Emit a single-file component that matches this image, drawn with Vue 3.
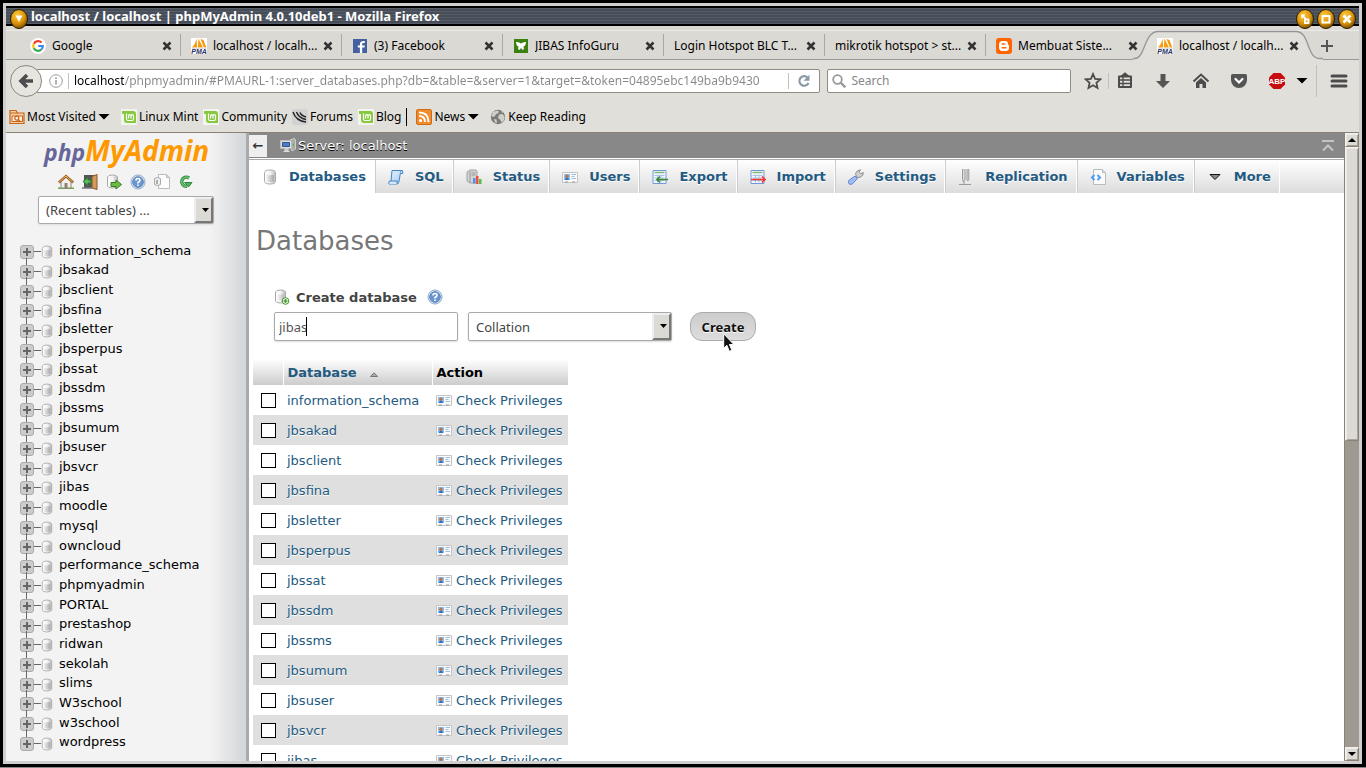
<script setup>
import { ref } from 'vue'

const browserTabs = [
  { title: 'Google', icon: 'google' },
  { title: 'localhost / localh...', icon: 'pma' },
  { title: '(3) Facebook', icon: 'facebook' },
  { title: 'JIBAS InfoGuru', icon: 'jibas' },
  { title: 'Login Hotspot BLC T...' },
  { title: 'mikrotik hotspot > st...' },
  { title: 'Membuat Siste...', icon: 'blogger' },
  { title: 'localhost / localh...', icon: 'pma', active: true }
]

const bookmarks = [
  { title: 'Most Visited', icon: 'visited', menu: true },
  { title: 'Linux Mint', icon: 'mint' },
  { title: 'Community', icon: 'mint' },
  { title: 'Forums', icon: 'forums' },
  { title: 'Blog', icon: 'mint', last: true },
  { title: 'News', icon: 'rss', menu: true },
  { title: 'Keep Reading', icon: 'globe' }
]

const tools = [
  { label: 'Home', icon: 'home' },
  { label: 'Log out', icon: 'exit' },
  { label: 'Query window', icon: 'dbgo' },
  { label: 'phpMyAdmin documentation', icon: 'help' },
  { label: 'Documentation', icon: 'docs' },
  { label: 'Reload navigation frame', icon: 'refresh' }
]

const tree = [
  'information_schema', 'jbsakad', 'jbsclient', 'jbsfina', 'jbsletter', 'jbsperpus', 'jbssat',
  'jbssdm', 'jbssms', 'jbsumum', 'jbsuser', 'jbsvcr', 'jibas', 'moodle', 'mysql', 'owncloud',
  'performance_schema', 'phpmyadmin', 'PORTAL', 'prestashop', 'ridwan', 'sekolah', 'slims',
  'W3school', 'w3school', 'wordpress'
]

const menu = [
  { title: 'Databases', icon: 'db', active: true },
  { title: 'SQL', icon: 'sql' },
  { title: 'Status', icon: 'status' },
  { title: 'Users', icon: 'users' },
  { title: 'Export', icon: 'export' },
  { title: 'Import', icon: 'import' },
  { title: 'Settings', icon: 'wrench' },
  { title: 'Replication', icon: 'replication' },
  { title: 'Variables', icon: 'variables' },
  { title: 'More', icon: 'more' }
]

const rows = tree.slice(0, 13)
const url = ref('localhost/phpmyadmin/#PMAURL-1:server_databases.php?db=&table=&server=1&target=&token=04895ebc149ba9b9430a')
const search = ref('')
const dbName = ref('jibas')
</script>

<template>
  <svg class="sprites" aria-hidden="true">
    <defs>
      <linearGradient id="cyl" x1="0" x2="1"><stop offset="0" stop-color="#fff" /><stop offset=".5" stop-color="#f4f4f4" /><stop offset="1" stop-color="#bbb" /></linearGradient>
      <linearGradient id="cylIn" x1="0" x2="1"><stop offset="0" stop-color="#f6f6f6" /><stop offset="1" stop-color="#a8a8a8" /></linearGradient>
      <radialGradient id="gold" cx=".4" cy=".3" r=".75"><stop offset="0" stop-color="#ffc83c" /><stop offset=".6" stop-color="#d99208" /><stop offset="1" stop-color="#6d4500" /></radialGradient>
      <linearGradient id="paper" x1="0" x2="1" y1="0" y2="1"><stop offset="0" stop-color="#e4f0fd" /><stop offset="1" stop-color="#a9cdf3" /></linearGradient>
    </defs>
    <symbol id="google" viewBox="0 0 16 16"><circle cx="8" cy="8" r="8" fill="#fff" /><g fill="none" stroke-width="2.2"><path d="M11.6 4.6A4.8 4.8 0 0 0 3.8 5.7" stroke="#ea4335" /><path d="M3.8 5.7a4.8 4.8 0 0 0 0 4.6" stroke="#fbbc05" /><path d="M3.8 10.3a4.8 4.8 0 0 0 7.5 1.2" stroke="#34a853" /><path d="M11.3 11.5A4.6 4.6 0 0 0 12.8 8H8.2" stroke="#4285f4" /></g></symbol>
    <symbol id="facebook" viewBox="0 0 16 16"><path d="M1 1h14v14H1z" fill="#4460a0" /><path d="M10.200 15V9.600h2.300l.3-2.200h-2.600V6.200c0-.8.3-1.200 1.200-1.200h1.400V3.100C10 2.700 7.900 3.500 7.900 6v1.400H5.800v2.200h2.100V15z" fill="#fff" /></symbol>
    <symbol id="jibas" viewBox="0 0 16 16"><path d="M1 1h14v14H1z" fill="#3d8012" /><path d="M8 5.500Q5.500 3.500 3 4q.2 4 2.800 4.700Q4 11 6.500 12L8 10l1.500 2Q12 11 10.200 8.700 12.800 8 13 4q-2.500-.5-5 1.500" fill="#fff" /></symbol>
    <symbol id="blogger" viewBox="0 0 16 16"><rect width="16" height="16" rx="3" fill="#f60" /><path d="M6.500 3h2.600Q12 3.200 12 6c0 1.200 1 .7 1 1.800v2Q12.800 13 9.800 13H6.200Q3.200 12.800 3 9.800V6.200Q3.200 3.200 6.500 3" fill="#fff" /><path d="M6.200 6h2.600M6.200 9.800h3.700" stroke="#f60" stroke-width="1.500" stroke-linecap="round" /></symbol>
    <symbol id="visited" viewBox="0 0 16 16"><path d="M1 14.500V1.500h6l1.500 2.500h6.500v10.500z" fill="#f5cfa6" stroke="#c8651b" stroke-width="1.200" /><path d="M1 4h8M3 7h10.500v5.500H3z" fill="#fff0df" stroke="#c8651b" /><circle cx="7.800" cy="9.200" r="2" fill="none" stroke="#c8651b" stroke-width="1.200" /><path d="m9.300 10.700 2 2" stroke="#c8651b" stroke-width="1.400" /></symbol>
    <symbol id="mint" viewBox="0 0 16 16"><path d="M0 0h16v16H0z" fill="#f3f4ef" /><path d="M1 2h11q3 0 3 3v9H6q-3 0-3-3V5H1z" fill="#86c93f" /><path d="M5.500 4.500V10q0 1.500 1.500 1.500h4q1.500 0 1.500-1.500V7q0-1.300-1.200-1.300T10 7v2.500M10 7q0-1.300-1.200-1.300T7.600 7v2.500" fill="none" stroke="#fff" stroke-width="1.200" /></symbol>
    <symbol id="forums" viewBox="0 0 16 16"><rect width="16" height="16" rx="3" fill="#d2d2d2" /><path d="M1 3q3 9 13 10M4.500 3q2 6 9.500 7.500M8 3.500q1 3 6 4.500" fill="none" stroke="#222" stroke-width="1.400" /></symbol>
    <symbol id="rss" viewBox="0 0 16 16"><rect x=".5" y=".5" width="15" height="15" rx="1.500" fill="#f08c2e" stroke="#d16b10" /><circle cx="4.500" cy="11.500" r="1.600" fill="#fff" /><path d="M3 7q6 0 6 6M3 3.500q9.500 0 9.500 9.500" fill="none" stroke="#fff" stroke-width="1.900" /></symbol>
    <symbol id="globe" viewBox="0 0 16 16"><circle cx="8" cy="8" r="7.200" fill="#7b7b78" /><path d="m3 3 4-1.500 2 1-1 2-2 .5L5 7 3 8 1.500 7zM9 5.500l3.500-.5 2.300 3-1 3.500-2 2-1.800-3L8 9zM4 10l2.500.5L7 14l-2-.6zM11 2l2 1-1 1z" fill="#cfcfcb" /></symbol>
    <symbol id="home" viewBox="0 0 16 16"><path d="M0 13.500h16V15H0z" fill="#6aaa4c" /><path d="M3 7.500 8 3l5 4.500V14H3z" fill="#f1efe9" stroke="#8c8579" /><path d="M6.500 9h3v5h-3z" fill="#8f8171" /><path d="M.8 8.500 8 2l7.200 6.500" fill="none" stroke="#9a5a20" stroke-width="2.400" /><path d="M1.200 8.200 8 2l6.800 6.200" fill="none" stroke="#edb765" stroke-width="1" /></symbol>
    <symbol id="exit" viewBox="0 0 16 16"><path d="M2 1h11v13H2z" fill="#555" /><path d="M10 2.500 15 .5v15l-5-1.500z" fill="#d49a5c" stroke="#8a5a2b" /><path d="M0 14h10" stroke="#777" stroke-width="1.500" /><path d="M9 6H6V3.500L1 7.500l5 4V9h3z" fill="#62b85f" stroke="#257c38" /></symbol>
    <symbol id="db" viewBox="0 0 14 16"><path d="M1.500 3.500Q2 1 7 1t5.500 2.500v9Q12 15 7 15t-5.500-2.500z" fill="url(#cyl)" stroke="#aaa" /><path d="M3 5.500q4 1.500 8 0v7q-4 1.500-8 0z" fill="url(#cylIn)" /></symbol>
    <symbol id="dbgo" viewBox="0 0 16 16"><path d="M1.500 3Q2 1 6.500 1t5 2v9q-.5 2-5 2t-5-2z" fill="url(#cyl)" stroke="#aaa" /><path d="M5 8.500h5V6l5.500 4.500L10 15v-2.500H5z" fill="#6fba45" stroke="#397b23" /></symbol>
    <symbol id="dbadd" viewBox="0 0 16 16"><path d="M1.500 3Q2 1 6.500 1t5 2v9q-.5 2-5 2t-5-2z" fill="url(#cyl)" stroke="#aaa" /><path d="M3 5q3.500 1.500 7 0v6q-3.500 1.500-7 0z" fill="url(#cylIn)" opacity=".6" /><circle cx="11.500" cy="12" r="3.300" fill="#fff" stroke="#3f8f2c" /><path d="M11.500 10v4M9.500 12h4" stroke="#4b9d35" stroke-width="1.600" /></symbol>
    <symbol id="help" viewBox="0 0 16 16"><circle cx="8" cy="8" r="7" fill="#dfeafa" stroke="#8fa9c8" /><circle cx="8" cy="8" r="5.300" fill="#6b97d0" stroke="#5680b8" /><path d="M6 6.500q0-2 2-2t2 1.700Q10 7.200 8 8.500v1M8 10.500v1.500" fill="none" stroke="#fff" stroke-width="1.600" /></symbol>
    <symbol id="docs" viewBox="0 0 16 16"><path d="M4.500.5h8l3 3v11h-11z" fill="#fcfcfc" stroke="#bbb" /><path d="M12.500.5v3h3" fill="#ddd" stroke="#bbb" /><path d="M.5 4.500q3-2 6 0v6q-3 2-6 0z" fill="#eee" stroke="#aaa" /><path d="M3 6v4" stroke="#999" stroke-width="1.500" /></symbol>
    <symbol id="refresh" viewBox="0 0 16 16"><path d="M11 4A4.600 4.600 0 1 0 9 12.300" fill="none" stroke="#2d8a43" stroke-width="3.400" /><path d="M11 4A4.600 4.600 0 1 0 9 12.300" fill="none" stroke="#6cc06b" stroke-width="1.600" /><path d="M6.500 8.500h7.500L10.500 13z" fill="#55ad5b" stroke="#2d8a43" /></symbol>
    <symbol id="server" viewBox="0 0 16 16"><path d="m10 2 4-1.500 1.500 1v9.500l-3.500 2z" fill="#aaa" stroke="#ccc" /><path d="M.5 2.500h11v8H.5z" fill="#ddd" stroke="#bbb" /><path d="M2.500 4.500h7v4h-7z" fill="#4e7cc4" stroke="#315591" /><path d="M5 11h3v2H5zM3.500 13.500h6" fill="#bbb" stroke="#ddd" /><path d="M13.500 6v2" stroke="#49b649" /></symbol>
    <symbol id="sql" viewBox="0 0 16 16"><path d="M4 1.500h10.500q-2 0-2 2l-1.500 9Q10.500 15 9 15H1q1.500-.5 2-3z" fill="url(#paper)" stroke="#4384c6" /><path d="M12.500 4.500h2.200q.5-3-1.200-3M1 15q-.8-1.500.5-3h8q-1 2-.2 3" fill="#d4e6fa" stroke="#4384c6" /></symbol>
    <symbol id="status" viewBox="0 0 16 16"><path d="M1 3 4 1h6l1 1v12H4l-3-2z" fill="#d2d2d2" stroke="#a2a2a2" /><path d="M4 2.500v11M5.500 4h4M5.500 6h4" stroke="#999" /><path d="M7 9h2.500v5.500H7z" fill="#5590e8" /><path d="M10 7h2.500v8H10z" fill="#f0503a" /><path d="M13 10h2.500v5H13z" fill="#4fbd4b" /></symbol>
    <symbol id="users" viewBox="0 0 16 16"><path d="M.5 3.500h15v10H.5z" fill="#fafafa" stroke="#c5c5c5" /><path d="M2 5h6v6H2z" fill="#8dbef0" /><path d="M3 11q0-2.500 2-2.500T7 11z" fill="#2872c5" /><circle cx="5" cy="7.200" r="1.700" fill="#bd7344" /><path d="M9.500 5.500H14M9.500 7.500h3M9.500 9.500H14" stroke="#9ebedf" /><path d="M3 13h3M10 13h3" stroke="#999" /></symbol>
    <symbol id="export" viewBox="0 0 16 16"><path d="M1 1.500h13v13H1z" fill="#f4f8fd" stroke="#6e9ad8" /><path d="M2.500 3.500h10" stroke="#80bc74" stroke-width="1.500" /><path d="M2.500 6.500h10M2.500 9h10M2.500 11.500h10M5.500 5.500v8M9 5.500v8" stroke="#a9c1e5" /><path d="M16 10.500H5m3-3-3 3 3 3" fill="none" stroke="#3f8635" stroke-width="1.700" /></symbol>
    <symbol id="import" viewBox="0 0 16 16"><path d="M1 1.500h13v13H1z" fill="#f4f8fd" stroke="#6e9ad8" /><path d="M2.500 3.500h10" stroke="#80bc74" stroke-width="1.500" /><path d="M2.500 6.500h10M2.500 9h10M2.500 11.500h10M5.500 5.500v8M9 5.500v8" stroke="#a9c1e5" /><path d="M1 10.500h14m-3-3 3 3-3 3" fill="none" stroke="#ef3a32" stroke-width="1.700" /></symbol>
    <symbol id="wrench" viewBox="0 0 16 16"><path d="m8.500 7.500-1-3Q9 1 12.500.8L11 3.300l1.500 1.500L15.300 3.500Q15.500 7 12.500 8L10 8.500z" fill="#d2d2d2" stroke="#8b8b8b" /><path d="m7 7 2.500 2.500-5 5.300q-2 1.200-3.500 0t0-3.500z" fill="#9ebef3" stroke="#6484d2" /></symbol>
    <symbol id="replication" viewBox="0 0 16 16"><path d="M4.500 0v10.500l1 2.500L7 11V0M9 0v10.500l.8 1.500 1-1.500V0" fill="#ddd" stroke="#999" /><path d="M1 15.500h12M6 13v2" stroke="#999" /></symbol>
    <symbol id="variables" viewBox="0 0 16 16"><path d="M3.500.5h9l3 3v12h-12z" fill="#fafafa" stroke="#bbb" /><path d="M12.500.5v3h3" fill="#ddd" stroke="#bbb" /><path d="M4.500 6 2 8.500 4.500 11M7.500 6 10 8.500 7.500 11" fill="none" stroke="#529df0" stroke-width="2" /></symbol>
    <symbol id="more" viewBox="0 0 16 16"><path d="M3 5.500h10l-5 5z" fill="#888" stroke="#111" /></symbol>
    <symbol id="plus" viewBox="0 0 14 14"><rect x=".5" y=".5" width="13" height="13" rx="2.500" fill="#ccc" stroke="#aaa" /><path d="M7 3v8M3 7h8" stroke="#666" stroke-width="2" /></symbol>
    <symbol id="close" viewBox="0 0 10 10"><path d="m1.500 1.500 7 7m0-7-7 7" stroke="#333" stroke-width="2.500" /></symbol>
    <symbol id="star" viewBox="0 0 18 18"><path d="m9 2 2.100 4.800 5.200.5-3.900 3.500 1.100 5.100L9 13.200l-4.500 2.700 1.100-5.100-3.900-3.500 5.200-.5z" fill="none" stroke="#4c4c4c" stroke-width="1.800" /></symbol>
    <symbol id="clip" viewBox="0 0 18 18"><path d="M3 4.500h12V15H3z" fill="none" stroke="#4c4c4c" stroke-width="2" stroke-linejoin="round" /><path d="m5.500 4 3.500-3 3.500 3zM3 8h12M3 11.500h12M7 5v10" stroke="#4c4c4c" stroke-width="1.300" fill="#4c4c4c" /></symbol>
    <symbol id="down" viewBox="0 0 18 18"><path d="M6.500 2h5v7H16l-7 7-7-7h4.500z" fill="#555" /></symbol>
    <symbol id="house" viewBox="0 0 18 18"><path d="M1.500 9.500 9 2.500l7.500 7" fill="none" stroke="#4c4c4c" stroke-width="2" /><path d="M4 10.500 9 6l5 4.500V16h-3.500v-4h-3v4H4z" fill="#4c4c4c" /></symbol>
    <symbol id="pocket" viewBox="0 0 18 18"><path d="M2.500 2h13q1.500 0 1.500 1.500V8a8 8 0 0 1-16 0V3.500Q1 2 2.500 2" fill="#555" /><path d="m5.500 7 3.500 3.500L12.500 7" fill="none" stroke="#fff" stroke-width="2.200" stroke-linecap="round" /></symbol>
    <symbol id="burger" viewBox="0 0 18 18"><path d="M2 4h14M2 9h14M2 14h14" stroke="#4c4c4c" stroke-width="3" stroke-linecap="round" /></symbol>
  </svg>

  <div class="screen">
    <div class="frame">
      <header class="titlebar">
        <button class="orb" aria-label="Window menu"><svg viewBox="0 0 18 20"><ellipse cx="9" cy="10" rx="8.500" ry="9.500" fill="url(#gold)" stroke="#2b1c00" /><path d="M5.500 6.500h7L9 13z" fill="#fff" /></svg></button>
        <h2>localhost / localhost | phpMyAdmin 4.0.10deb1 - Mozilla Firefox</h2>
        <div class="orbs">
          <button class="orb" aria-label="Minimize"><svg viewBox="0 0 18 20"><ellipse cx="9" cy="10" rx="8.500" ry="9.500" fill="url(#gold)" stroke="#2b1c00" /><path d="M9 10.500h3.500V14H9z" fill="none" stroke="#fff" stroke-width="1.800" /><path d="M5 5.500h4.500L8 7l2.500 2.500-1.500 1L7 8.500 5.500 10z" fill="#fff" /></svg></button>
          <button class="orb" aria-label="Maximize"><svg viewBox="0 0 18 20"><ellipse cx="9" cy="10" rx="8.500" ry="9.500" fill="url(#gold)" stroke="#2b1c00" /><path d="M5.500 7h7v6.500h-7z" fill="none" stroke="#fff" stroke-width="2" /></svg></button>
          <button class="orb" aria-label="Close"><svg viewBox="0 0 18 20"><ellipse cx="9" cy="10" rx="8.500" ry="9.500" fill="url(#gold)" stroke="#2b1c00" /><path d="m5.500 6.500 7 7m0-7-7 7" stroke="#fff" stroke-width="2.600" /></svg></button>
        </div>
      </header>

      <nav class="tabstrip" aria-label="Browser tabs">
        <div v-for="(t, i) in browserTabs" :key="i" class="tab" :class="{ active: t.active, before: i === 6 }">
          <svg v-if="t.active" class="shape" viewBox="0 0 190 30" preserveAspectRatio="none"><path d="M0 28.500h2C12 28.500 11 1.500 25 1.500H163C177 1.500 173 28.500 187 28.500h3V30H0z" fill="#e0dfd9" /><path d="M0 28.500h2C12 28.500 11 1.500 25 1.500H163C177 1.500 173 28.500 187 28.500h3" fill="none" stroke="#96969a" stroke-width="1.300" /></svg>
          <svg v-if="t.icon === 'pma'" class="i16" viewBox="0 0 16 16"><path d="M0 0h16v16H0z" fill="#fff" /><path d="M1 9.500Q4.500 6 5.500 1l.8 8.500zM7 9.500 7.300.5 12 9.500zM9.500 1l3 1 2.800 7.500h-2.400z" fill="#f79a10" /><path d="M1 10.300h14.500" stroke="#d9d9d9" /><text x="8" y="16" text-anchor="middle" font-family="Liberation Sans" font-size="7" font-weight="bold" font-style="italic" fill="#2c3166">PMA</text></svg>
          <svg v-else-if="t.icon" class="i16"><use :href="'#' + t.icon" /></svg>
          <span>{{ t.title }}</span>
          <button aria-label="Close tab"><svg class="i10"><use href="#close" /></svg></button>
        </div>
        <button class="newtab" aria-label="New tab"><svg viewBox="0 0 14 14"><path d="M7 1v12M1 7h12" stroke="#555" stroke-width="2" /></svg></button>
      </nav>

      <div class="navbar">
        <button class="back" aria-label="Back"><svg viewBox="0 0 32 32"><circle cx="16" cy="16" r="15.500" fill="#e6e5e0" stroke="#8a877e" /><path d="M23 16H11m6-6-6 6 6 6" fill="none" stroke="#4c4c4c" stroke-width="3.600" /></svg></button>
        <div class="urlbox">
          <svg class="info" viewBox="0 0 14 14"><circle cx="7" cy="7" r="6.300" fill="none" stroke="#999" /><path d="M7 6v4.500M7 3.300V5" stroke="#999" stroke-width="1.500" /></svg>
          <i class="bar"></i>
          <input v-model="url" class="url" aria-label="Address" />
          <i class="bar"></i>
          <button class="reload" aria-label="Reload"><svg viewBox="0 0 14 14"><path d="M10.500 3.500A4.800 4.800 0 1 0 11.500 9" fill="none" stroke="#8a9aa6" stroke-width="2.200" /><path d="M12.500.8v6h-6z" fill="#8a9aa6" /></svg></button>
        </div>
        <div class="searchbox">
          <svg viewBox="0 0 14 14"><circle cx="5.500" cy="5.500" r="4.300" fill="none" stroke="#999" stroke-width="1.800" /><path d="m8.500 8.500 4.800 4.800" stroke="#999" stroke-width="2.400" /></svg>
          <input v-model="search" placeholder="Search" aria-label="Search" />
        </div>
        <div class="buttons">
          <button aria-label="Bookmark this page"><svg><use href="#star" /></svg></button>
          <i class="bar"></i>
          <button aria-label="Bookmarks"><svg><use href="#clip" /></svg></button>
          <button class="wide" aria-label="Downloads"><svg><use href="#down" /></svg></button>
          <button class="wide" aria-label="Home"><svg><use href="#house" /></svg></button>
          <button class="wide" aria-label="Pocket"><svg><use href="#pocket" /></svg></button>
          <button class="wide" aria-label="Adblock Plus"><svg viewBox="0 0 18 18"><path d="M5.500 1h7L17 5.500v7L12.500 17h-7L1 12.500v-7z" fill="#c70d0d" /><text x="9" y="12" text-anchor="middle" font-family="Liberation Sans" font-size="8" font-weight="bold" fill="#fff">ABP</text></svg></button>
          <button class="caret" aria-label="Adblock Plus menu"></button>
          <i class="bar tall"></i>
          <button class="burger" aria-label="Open menu"><svg><use href="#burger" /></svg></button>
        </div>
      </div>

      <nav class="bookmarks" aria-label="Bookmarks">
        <a v-for="b in bookmarks" :key="b.title" href="#" :class="{ folder: b.menu, last: b.last }">
          <svg class="i16"><use :href="'#' + b.icon" /></svg>{{ b.title }}<i v-if="b.menu"></i>
        </a>
      </nav>

      <div class="page">
        <aside class="sidebar">
          <a href="#" class="logo"><span>php</span>MyAdmin</a>
          <div class="tools">
            <a v-for="t in tools" :key="t.icon" href="#" :aria-label="t.label"><svg class="i16"><use :href="'#' + t.icon" /></svg></a>
          </div>
          <div class="select recent">
            <select aria-label="Recent tables"><option>(Recent tables) ...</option></select>
          </div>
          <ul class="tree">
            <li v-for="name in tree" :key="name">
              <button :aria-label="'Expand ' + name"><svg><use href="#plus" /></svg></button>
              <svg class="dbicon"><use href="#db" /></svg>
              <a href="#">{{ name }}</a>
            </li>
          </ul>
        </aside>
        <div class="splitter"></div>

        <main>
          <div class="crumb">
            <button aria-label="Hide panel">←</button>
            <svg class="i16"><use href="#server" /></svg>
            <a href="#">Server: localhost</a>
            <svg class="totop" viewBox="0 0 12 12"><path d="M0 1h12M1 10.500l5-5 5 5" fill="none" stroke="#c4c4c4" stroke-width="2" /></svg>
          </div>
          <nav class="menu" aria-label="Server">
            <a v-for="m in menu" :key="m.title" href="#" :class="{ active: m.active }"><svg class="i16"><use :href="'#' + m.icon" /></svg>{{ m.title }}</a>
          </nav>
          <div class="body">
            <h1>Databases</h1>
            <form class="create" @submit.prevent>
              <div class="legend">
                <svg class="i16"><use href="#dbadd" /></svg>
                <label for="newdb">Create database</label>
                <a href="#" aria-label="Documentation"><svg class="i16"><use href="#help" /></svg></a>
              </div>
              <div class="fields">
                <div class="field">
                  <input id="newdb" v-model="dbName" /><i class="textcaret"></i>
                </div>
                <div class="select collation">
                  <select aria-label="Collation"><option>Collation</option></select>
                </div>
                <div class="submit">
                  <button>Create</button>
                  <svg class="pointer" viewBox="0 0 12 20"><path d="M.7.8v14.500l3.200-3 2.400 6 2.600-1.100-2.500-5.700h4.500z" fill="#111" stroke="#fff" /></svg>
                </div>
              </div>
            </form>
            <table>
              <thead>
                <tr><th class="c1"></th><th class="c2"><a href="#">Database</a><svg viewBox="0 0 8 5"><path d="M.5 4.500 4 .8l3.500 3.700z" fill="#aaa" stroke="#777" /></svg></th><th class="c3">Action</th></tr>
              </thead>
              <tbody>
                <tr v-for="name in rows" :key="name">
                  <td class="c1"><input type="checkbox" :aria-label="name" /></td>
                  <td class="c2"><a href="#">{{ name }}</a></td>
                  <td class="c3"><a href="#"><svg class="i16"><use href="#users" /></svg>Check Privileges</a></td>
                </tr>
              </tbody>
            </table>
          </div>
        </main>

        <div class="scroll">
          <button class="up" aria-label="Scroll up"></button>
          <div class="track"><div class="thumb"></div></div>
          <button class="dn" aria-label="Scroll down"></button>
        </div>
      </div>
    </div>
  </div>
</template>

<style>
html, body { margin: 0; background: #000; }
</style>

<style scoped>
* { box-sizing: border-box; }
.sprites { position: absolute; width: 0; height: 0; }
a { text-decoration: none; color: inherit; }
button { padding: 0; border: 0; background: none; display: flex; align-items: center; justify-content: center; }
svg { display: block; flex: none; }
.i16 { width: 16px; height: 16px; }
.i10 { width: 10px; height: 10px; }
.screen { height: 100vh; overflow: hidden; padding: 3px 4px 3px 3px; background: #000; border-bottom: 1px solid #888; font-family: "Noto Sans", "Open Sans", sans-serif; font-size: 12px; color: #000; }
.frame { height: 100%; border: 3px solid #cfcfcd; display: flex; flex-direction: column; background: #e0dfd9; }

.titlebar { height: 20px; flex: none; display: flex; align-items: center; padding: 0 3px 0 4px; border-top: 2px solid #000; border-bottom: 2px solid #000; background: repeating-linear-gradient(#565d67 0 1px, #464d58 1px 3px); position: relative; z-index: 2; }
.titlebar h2 { margin: 0 auto 0 3px; color: #fff; font-size: 13px; line-height: 18px; font-weight: bold; white-space: nowrap; }
.orbs { display: flex; gap: 3px; }
.orb, .orb svg { width: 18px; height: 20px; }
.titlebar .orb { margin-top: 5px; }

.tabstrip { height: 34px; flex: none; display: flex; padding: 4px 0 0 14px; background: #dbd9d4; border-bottom: 1px solid #98979a; box-shadow: inset 0 4px #dcdad5, inset 0 5px #eceae6; }
.tab { position: relative; flex: 0 1 161px; min-width: 0; display: flex; align-items: center; gap: 6px; padding: 2px 9px 0 10px; }
.tab::after { content: ""; position: absolute; right: 0; top: 4px; bottom: 3px; width: 1px; background: #aaa8a2; }
.tab.before::after, .tab.active::after { display: none; }
.tab > * { position: relative; }
.tab span { flex: 1; white-space: nowrap; overflow: hidden; line-height: 18px; }
.tab .shape { position: absolute; left: -14px; top: 0; width: 190px; height: 30px; }
.newtab { margin-left: 12px; width: 14px; padding-top: 2px; }
.newtab svg { width: 14px; height: 14px; }

.navbar { height: 41px; flex: none; display: flex; align-items: center; padding: 0 11px 0 4px; }
.back { position: relative; z-index: 1; margin-right: -6px; }
.back, .back svg { width: 32px; height: 32px; }
.bar { width: 1px; height: 16px; background: #c2c1bb; flex: none; }
.urlbox, .searchbox { height: 24px; display: flex; align-items: center; background: #fff; border: 1px solid #8f8b82; border-radius: 2px; }
.urlbox { flex: 798 1 0; min-width: 0; padding-left: 12px; gap: 5px; }
.info { width: 14px; height: 14px; }
.url { flex: 1; min-width: 0; margin-right: 24px; color: transparent; background: linear-gradient(90deg, #000 50px, #888 50px); background-clip: text; -webkit-background-clip: text; }
.url, .searchbox input { border: 0; padding: 0; outline: 0; font: 12px/18px "Noto Sans", sans-serif; }
.reload { width: 19px; margin-right: 6px; }
.reload svg { width: 14px; height: 14px; }
.searchbox { flex: 242 1 0; min-width: 0; margin-left: 7px; padding: 0 4px; gap: 5px; }
.searchbox svg { width: 14px; height: 14px; }
.searchbox input { flex: 1; min-width: 0; background: none; }
.searchbox input::placeholder { color: #888; }
.buttons { flex: none; display: flex; align-items: center; padding-left: 13px; }
.buttons svg { width: 18px; height: 18px; }
.buttons > .bar { margin: 0 7px 0 6px; }
.wide { margin-left: 20px; }
.caret { width: 12px; height: 6px; margin-left: 10px; background: #000; clip-path: polygon(0 0, 100% 0, 50% 100%); }
.buttons > .tall { height: 32px; margin: 0 13px 0 8px; }

.bookmarks { height: 32px; flex: none; display: flex; align-items: center; padding: 0 3px; border-bottom: 1px solid #8a8275; }
.bookmarks a { display: flex; align-items: center; gap: 2px; margin-right: 5px; line-height: 18px; white-space: nowrap; }
.bookmarks a i { width: 12px; height: 6px; background: #000; clip-path: polygon(0 0, 100% 0, 50% 100%); }
.bookmarks .folder { margin-right: 11px; }
.bookmarks .last { padding-right: 5px; margin-right: 9px; border-right: 1px solid #000; }

.page { flex: 1; min-height: 0; display: flex; background: #fff; font-family: "DejaVu Sans", sans-serif; font-size: 13px; }
.sidebar { width: 240px; flex: none; display: flex; flex-direction: column; overflow: hidden; background: linear-gradient(90deg, #f3f3f3 85%, #d2d5d9); }
.logo { padding-left: 38px; color: #f90; font: italic bold 28px/34px "Noto Sans", sans-serif; }
.logo span { color: #669; font-size: 23px; }
.tools { display: flex; gap: 8px; padding-left: 52px; height: 26px; align-items: center; }
.select { position: relative; background: #fff; border: 1px solid #aaa; border-radius: 2px; box-shadow: 0 1px 2px #ddd; }
.select select { width: 100%; height: 100%; appearance: none; border: 0; background: none; padding: 0 18px 0 7px; font: 13px "Noto Sans", sans-serif; color: #444; }
.select::before { content: ""; position: absolute; right: 0; top: 0; bottom: 0; width: 15px; background: #dcdad5; border: 2px solid; border-color: #eee #777 #777 #eee; }
.select::after { content: ""; position: absolute; right: 4px; top: 11px; width: 7px; height: 4px; background: #000; clip-path: polygon(0 0, 100% 0, 50% 100%); }
.recent { width: 176px; height: 28px; flex: none; margin: 1px 0 17px 32px; }
.tree { flex: 1; min-height: 0; list-style: none; margin: 0 0 9px; padding: 0 0 0 14px; display: flex; flex-direction: column; }
.tree li { flex: 1; min-height: 0; display: flex; align-items: center; position: relative; }
.tree li + li::before { content: ""; position: absolute; left: 6px; top: -3px; width: 1px; height: 8px; background: #666; }
.tree li button { position: relative; }
.tree li button, .tree li button svg { width: 14px; height: 14px; }
.tree li button, .dbicon { margin-top: 3px; }
.tree li button::after { content: ""; position: absolute; left: 14px; top: 6px; width: 7px; height: 1px; background: #666; }
.dbicon { width: 12px; height: 14px; margin-left: 7px; }
.tree a { margin-left: 6px; line-height: 18px; }
.splitter { width: 3px; flex: none; background: #aaa; }

main { flex: 1; min-width: 0; overflow: hidden; }
.crumb { height: 25px; display: flex; align-items: center; background: #888; color: #fff; }
.crumb button { width: 18px; height: 22px; margin-right: 13px; background: #eee; color: #333; font: bold 13px "DejaVu Sans", sans-serif; }
.crumb a { margin-left: 2px; text-shadow: 0 1px 0 #000; }
.totop { width: 12px; height: 12px; margin: 0 10px 0 auto; }
.menu { height: 34px; display: flex; border-top: 1px solid #aaa; margin-top: 1px; background: linear-gradient(#fff, #dcdcdc); }
.menu a { display: flex; align-items: center; gap: 11px; padding: 0 8px 0 12px; border-left: 1px solid #ccc; border-right: 1px solid #fff; color: #235a81; font-weight: bold; text-shadow: 0 1px 0 #fff; white-space: nowrap; }
.menu a.active { background: #fff; border-left-color: #fff; }
.body { padding: 0 4px; }
h1 { margin: 33px 0 31px 3px; font-size: 26px; line-height: 30px; font-weight: normal; color: #777; }
.create { margin: 0 0 18px 21px; }
.legend { display: flex; align-items: center; height: 20px; margin-bottom: 5px; color: #444; font-weight: bold; }
.legend label { margin: 0 10px 0 6px; }
.fields { display: flex; height: 29px; }
.field { position: relative; width: 184px; margin-right: 10px; }
.field input { width: 100%; height: 29px; border: 1px solid #aaa; border-radius: 2px; box-shadow: 0 1px 2px #ddd; padding: 0 4px; font: 13px "Noto Sans", sans-serif; color: #555; outline: 0; }
.textcaret { position: absolute; left: 32px; top: 5px; width: 1px; height: 19px; background: #000; }
.collation { width: 204px; margin-right: 18px; }
.submit { position: relative; }
.submit button { height: 29px; width: 66px; border: 1px solid #aaa; border-radius: 12px; background: linear-gradient(#ccc, #ddd); font: bold 13px "Noto Sans", sans-serif; color: #111; text-shadow: 0 1px 0 #fff; }
.pointer { position: absolute; left: 33px; top: 21px; width: 12px; height: 20px; }
table { border-collapse: collapse; }
th { height: 26px; padding: 0 4px; text-align: left; background: linear-gradient(#fff, #ccc); border-right: 1px solid #fff; }
th a { color: #235a81; }
th svg { display: inline-block; width: 8px; height: 5px; margin-left: 13px; }
td { height: 30px; padding: 0 4px; }
td a { color: #235a81; display: flex; align-items: center; gap: 4px; white-space: nowrap; }
tbody tr:nth-child(even) { background: #dfdfdf; text-shadow: 0 1px 0 #fff; }
.c1 { width: 30px; }
.c2 { width: 149px; }
.c3 { width: 136px; }
td.c1 { padding-left: 8px; }
td input { display: block; appearance: none; width: 15px; height: 15px; margin: 0; border: 1px solid #000; background: #fff; }

.scroll { width: 15px; flex: none; display: flex; flex-direction: column; border-left: 1px solid #8a8275; background: #9e9a91; }
.up, .dn, .thumb { background: #dcdad5; border: 1px solid; border-color: #f3f2ee #8a8275 #8a8275 #f3f2ee; box-shadow: inset 1px 1px #eceae6, inset -1px -1px #a8a49b; }
.up, .dn { height: 14px; flex: none; }
.up::after, .dn::after { content: ""; width: 8px; height: 4px; background: #000; clip-path: polygon(50% 0, 100% 100%, 0 100%); }
.dn::after { clip-path: polygon(0 0, 100% 0, 50% 100%); }
.track { flex: 1; }
.thumb { height: 49%; }
</style>
